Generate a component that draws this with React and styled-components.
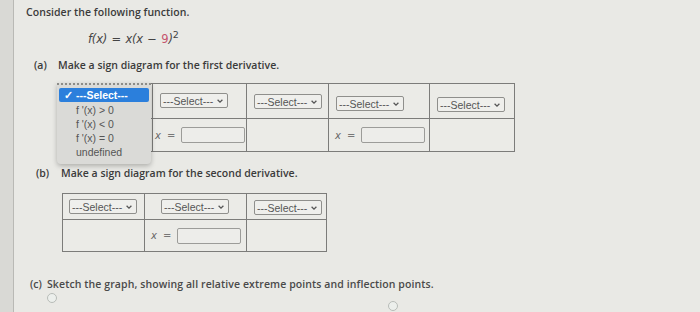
import React from 'react'
import styled, { createGlobalStyle } from 'styled-components'

const Global = createGlobalStyle`
  html, body {margin: 0; padding: 0; background: #e8e8e4;}
  body {font-family: "Open Sans", "DejaVu Sans", sans-serif; color: #3b3b3b;}
`

const Page = styled.div`
  width: 700px; height: 312px; display: flex; overflow: hidden; background: #e9e9e5;
`
const Edge = styled.div`
  width: 13px; flex-shrink: 0; background: #d9d9d5; border-right: 1px solid #b9b9b5;
`
const Content = styled.div`
  flex: 1; display: flex; flex-direction: column; position: relative;
`
const Title = styled.div`
  margin: 5px 0 0 12px; font-size: 10.5px; font-weight: 600; line-height: 14px; letter-spacing: 0.05px;
`
const Formula = styled.div`
  margin: 12px 0 0 74px; font-size: 11.5px; line-height: 16px; font-style: italic; font-family: "DejaVu Sans", sans-serif; color: #444; letter-spacing: -0.2px;
  .up {font-style: normal; margin: 0 1px;}
  .red {color: #c5566e; font-style: normal;}
  sup {font-size: 9.5px; font-style: normal; vertical-align: 5px; line-height: 0;}
`
const Part = styled.div`
  display: flex; font-size: 10.5px; font-weight: 600; line-height: 14px; white-space: nowrap;
  color: ${p => p.$tone || '#3b3b3b'};
  margin: ${p => p.$top}px 0 0 ${p => p.$left}px;
  b {font-weight: 600; width: ${p => p.$label}px; flex-shrink: 0;}
`
const TableWrap = styled.div`
  position: relative; margin: ${p => p.$top}px 0 0 ${p => p.$left}px; align-self: flex-start;
`
const Grid = styled.div`
  display: grid; grid-template-columns: ${p => p.$cols}; grid-template-rows: ${p => p.$rows};
  border: 1px solid #7c7c7a; background: #ebebe7;
`
const Cell = styled.div`
  border-right: 1px solid #7c7c7a; border-bottom: ${p => (p.$last ? 0 : 1)}px solid #7c7c7a;
  &:nth-child(${p => p.$n}n) {border-right: 0;}
  display: flex; align-items: ${p => (p.$mid ? 'center' : 'flex-start')};
  padding: ${p => p.$pad || '0'};
`
const Select = styled.div`
  display: flex; align-items: center; gap: 3px; height: 13px; padding: 0 3px 0 2px; border: 1px solid #8f8f8c; border-radius: 2px;
  background: #efefec; font-family: "Liberation Sans", Arial, sans-serif; font-size: 10.5px; color: #555; white-space: nowrap;
  svg {width: 8px; height: 8px;}
`
const XInput = styled.div`
  display: flex; align-items: center; gap: 6px; font-size: 10px; color: #666; font-style: italic; font-family: "DejaVu Sans", sans-serif;
  span {font-style: normal; color: #777;}
`
const Box = styled.div`
  width: ${p => p.$w}px; height: 14px; border: 1px solid #9c9c99; border-radius: 2px; background: #ededea;
`
const Popup = styled.div`
  position: absolute; left: -1px; top: 0; width: 94px; height: 79px; background: #dadad7; border-radius: 0 0 4px 4px;
  box-shadow: 0 2px 5px rgba(0,0,0,0.25); border-top: 2px dotted #8c8c88; z-index: 2;
  font-family: "Liberation Sans", Arial, sans-serif; font-size: 10.5px; line-height: 14px; color: #555;
`
const Opt = styled.div`
  padding-left: ${p => (p.$active ? 5 : 19)}px; height: 14px; display: flex; align-items: center; white-space: nowrap;
  ${p => p.$active && `background: #2b7fdc; color: #fff; font-weight: 700; margin: 3px 2px 1px 2px; border-radius: 2px;`}
`
const Radio = styled.span`
  display: block; width: 8px; height: 8px; border-radius: 50%; border: 1px solid #b8bcb8; background: #ecefec;
  margin: ${p => p.$m};
`
const Radios = styled.div`
  display: flex; align-items: flex-start;
`

const Chevron = () => (
  <svg viewBox="0 0 10 10"><path d="M2 3.5 L5 6.5 L8 3.5" fill="none" stroke="#555" strokeWidth="1.6" /></svg>
)
const Sel = () => <Select>---Select---<Chevron /></Select>

const App = () => (
  <Page>
    <Global />
    <Edge />
    <Content>
      <Title>Consider the following function.</Title>
      <Formula>f(x) <span className="up">=</span> x(x <span className="up">−</span> <span className="red">9</span>)<sup>2</sup></Formula>
      <Part $top={11} $left={20} $label={24}><b>(a)</b>Make a sign diagram for the first derivative.</Part>
      <TableWrap $top={11} $left={44}>
        <Grid $cols="94px 94px 82px 101px 84px" $rows="35px 32px">
          <Cell $n={5} />
          <Cell $n={5} $pad="9px 0 0 7px"><Sel /></Cell>
          <Cell $n={5} $pad="10px 0 0 7px"><Sel /></Cell>
          <Cell $n={5} $pad="12px 0 0 7px"><Sel /></Cell>
          <Cell $n={5} $pad="13px 0 0 7px"><Sel /></Cell>
          <Cell $n={5} $last />
          <Cell $n={5} $last $mid $pad="0 0 0 2px"><XInput>x<span>=</span><Box $w={62} /></XInput></Cell>
          <Cell $n={5} $last />
          <Cell $n={5} $last $mid $pad="0 0 0 6px"><XInput>x<span>=</span><Box $w={62} /></XInput></Cell>
          <Cell $n={5} $last />
        </Grid>
        <Popup>
          <Opt $active>✓ ---Select---</Opt>
          <Opt>f '(x) &gt; 0</Opt>
          <Opt>f '(x) &lt; 0</Opt>
          <Opt>f '(x) = 0</Opt>
          <Opt>undefined</Opt>
        </Popup>
      </TableWrap>
      <Part $top={14} $left={22} $label={25}><b>(b)</b>Make a sign diagram for the second derivative.</Part>
      <TableWrap $top={13} $left={48}>
        <Grid $cols="82px 102px 79px" $rows="26px 31px">
          <Cell $n={3} $pad="5px 0 0 6px"><Sel /></Cell>
          <Cell $n={3} $pad="5px 0 0 16px"><Sel /></Cell>
          <Cell $n={3} $pad="6px 0 0 7px"><Sel /></Cell>
          <Cell $n={3} $last />
          <Cell $n={3} $last $mid $pad="0 0 0 6px"><XInput>x<span>=</span><Box $w={62} /></XInput></Cell>
          <Cell $n={3} $last />
        </Grid>
      </TableWrap>
      <Part $top={25} $left={16} $label={17} $tone="#4a4a4a">
        <b>(c)</b><span style={{ letterSpacing: '0.1px' }}>Sketch the graph, showing all relative extreme points and inflection points.</span>
      </Part>
      <Radios>
        <Radio $m="2px 0 0 33px" />
        <Radio $m="10px 0 0 331px" />
      </Radios>
    </Content>
  </Page>
)

export default App
